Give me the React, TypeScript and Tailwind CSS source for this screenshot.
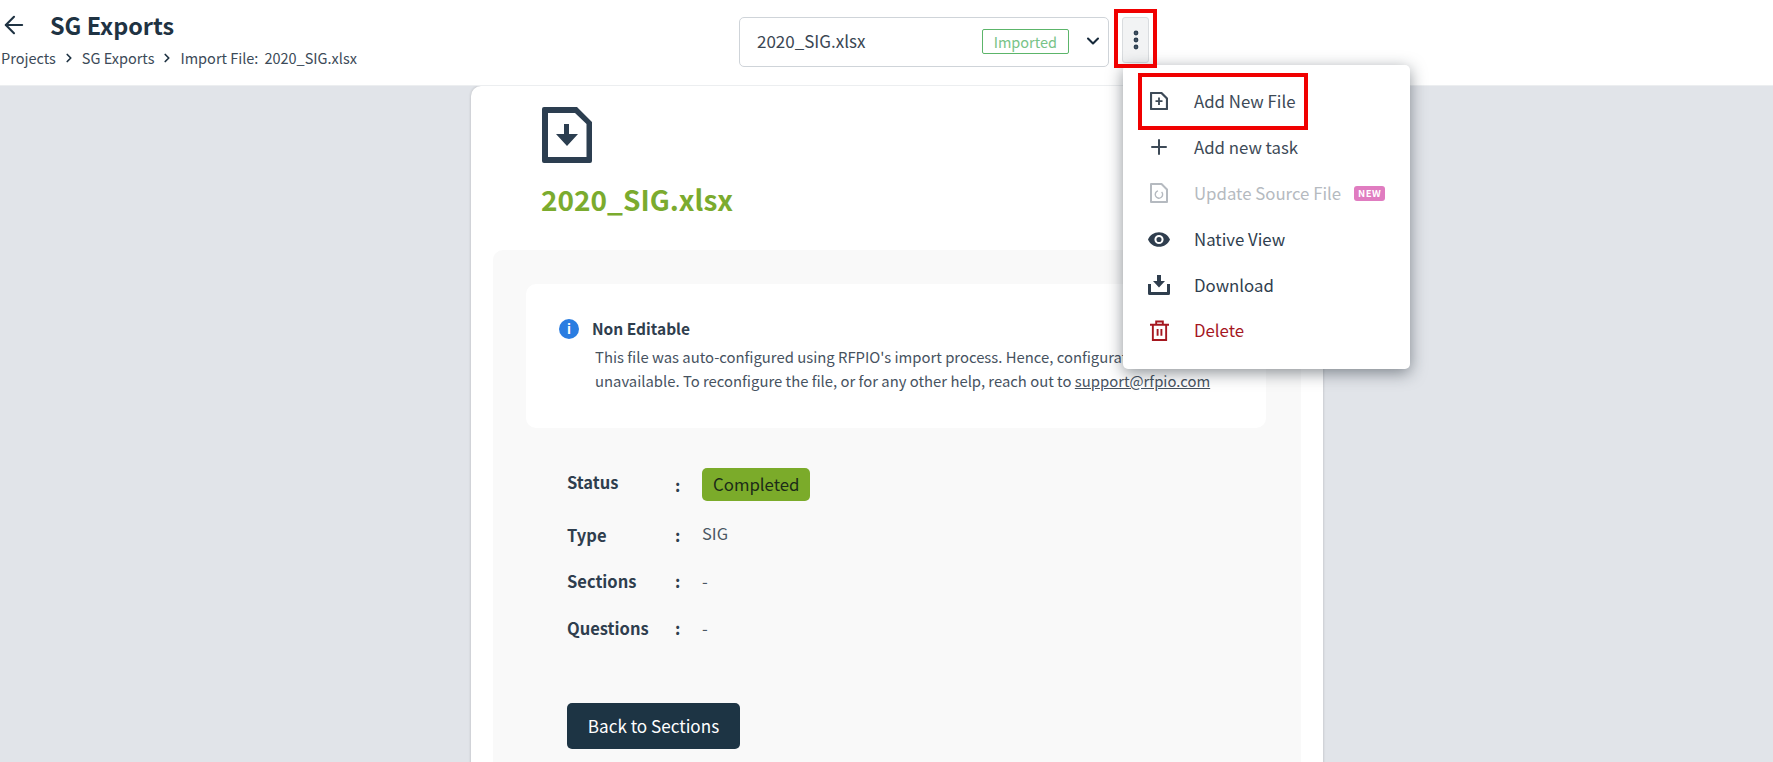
import { ArrowLeft, ChevronDown, ChevronRight, EllipsisVertical, Plus } from "lucide-react";

const fontStack = "font-['Noto_Sans_CJK_JP','Source_Sans_Pro',sans-serif]";

function FileAddIcon({ className }: { className?: string }) {
  return (
    <svg viewBox="0 0 18 18" className={className} fill="none" stroke="currentColor" strokeWidth="2.2">
      <path d="M1 1h10.500L17 6.500V17H1z" strokeLinejoin="round" />
      <path d="M9 5.500v7.500M5.500 9.200h7" strokeWidth="1.800" />
    </svg>
  );
}

function FileSyncIcon({ className }: { className?: string }) {
  return (
    <svg viewBox="0 0 18 20" className={className} fill="none" stroke="currentColor" strokeWidth="2">
      <path d="M1 1h10.500L17 6.500V19H1z" strokeLinejoin="round" />
      <path d="M11.600 8.900A3.700 3.700 0 1 1 8 7.900" strokeWidth="1.400" />
    </svg>
  );
}

function EyeIcon({ className }: { className?: string }) {
  return (
    <svg viewBox="0 0 24 16" className={className} fill="currentColor">
      <path
        fillRule="evenodd"
        d="M12 0C6.500 0 2 3.300 0 8c2 4.700 6.500 8 12 8s10-3.300 12-8c-2-4.700-6.500-8-12-8zm0 13a5 5 0 1 1 0-10 5 5 0 0 1 0 10zm0-2.200a2.800 2.800 0 1 0 0-5.600 2.800 2.800 0 0 0 0 5.600z"
      />
    </svg>
  );
}

function DownloadIcon({ className }: { className?: string }) {
  return (
    <svg viewBox="0 0 22 20" className={className} fill="currentColor">
      <path d="M9 0h4v6h4l-6 6.500L5 6h4z" />
      <path d="M0 9h3v8h16V9h3v9.500a1.500 1.500 0 0 1-1.500 1.500h-19A1.500 1.500 0 0 1 0 18.500z" />
    </svg>
  );
}

function TrashIcon({ className }: { className?: string }) {
  return (
    <svg viewBox="0 0 20 22" className={className} fill="none" stroke="currentColor" strokeWidth="2">
      <path d="M0 5h20M6.500 5V1.500h7V5M3 5v16h14V5" />
      <path d="M8 9.500v7M12 9.500v7" />
    </svg>
  );
}

function FileDownloadIcon({ className }: { className?: string }) {
  return (
    <svg viewBox="0 0 50 56" className={className}>
      <path
        fill="#2c3e50"
        fillRule="evenodd"
        d="M2 0h33l15 15v39a2 2 0 0 1-2 2H2a2 2 0 0 1-2-2V2a2 2 0 0 1 2-2zm4 6v44h38.500V17L33 6z"
      />
      <path fill="#2c3e50" d="M22 17h5v10h9L25 39 14 27h8z" />
    </svg>
  );
}

function DetailRow({
  label,
  children,
  className,
  raised,
}: {
  label: string;
  children: React.ReactNode;
  className?: string;
  raised?: boolean;
}) {
  return (
    <div className={`flex items-center ${className ?? ""}`}>
      <span className={`w-[108px] text-[16.5px] leading-6 font-semibold text-[#2f3e4e] ${raised ? "pb-[5px]" : ""}`}>{label}</span>
      <span className="w-[27px] text-[16.5px] leading-6 font-bold text-[#2f3e4e]">:</span>
      {children}
    </div>
  );
}

function MenuItem({
  icon,
  label,
  color,
  badge,
}: {
  icon: React.ReactNode;
  label: string;
  color: string;
  badge?: boolean;
}) {
  return (
    <div className={`flex h-[46px] items-center ${color}`}>
      <span className="flex w-[71px] shrink-0 justify-center pl-[1px]">{icon}</span>
      <span className="text-[16.8px] leading-6">{label}</span>
      {badge && (
        <span className="ml-[13px] rounded-[3px] bg-[#e07cc0] px-[4px] text-[9.500px] leading-[15px] font-bold tracking-[0.5px] text-white">
          NEW
        </span>
      )}
    </div>
  );
}

export default function App() {
  return (
    <div className={`relative h-[762px] overflow-hidden bg-[#e1e4e9] ${fontStack}`}>
      {/* Top bar */}
      <header className="relative flex h-[86px] items-start border-b border-[#eceef0] bg-white">
        <div className="w-[739px] shrink-0">
          <div className="mt-[9px] flex h-[32px] items-center">
            <ArrowLeft className="h-[28px] w-[28px] text-[#1f3343]" strokeWidth={1.8} />
            <h1 className="ml-[22px] text-[23.4px] leading-8 font-semibold text-[#1f3343]">SG Exports</h1>
          </div>
          <nav className="mt-[7px] flex h-5 items-center pl-[1px] text-[14.5px] leading-5 text-[#3c4a58]">
            <span>Projects</span>
            <ChevronRight className="mx-[6px] h-[14px] w-[14px] text-[#1f3343]" strokeWidth={3} />
            <span>SG Exports</span>
            <ChevronRight className="mx-[6px] h-[14px] w-[14px] text-[#1f3343]" strokeWidth={3} />
            <span>Import File:</span>
            <span className="ml-[6px]">2020_SIG.xlsx</span>
          </nav>
        </div>

        <div className="mt-[17px] flex h-[50px] w-[370px] shrink-0 items-center rounded-[5px] border border-[#cfd4d9] bg-white pr-[5px] pb-[2px] pl-[17px]">
          <span className="flex-1 text-[17px] leading-6 text-[#3a4653]">2020_SIG.xlsx</span>
          <span className="rounded-[2px] border border-[#5cb56a] px-[11px] text-[14.500px] leading-[23px] text-[#78c387]">Imported</span>
          <ChevronDown className="ml-[14px] h-[20px] w-[20px] text-[#16293a]" strokeWidth={2.5} />
        </div>

        <button className="mt-[17px] ml-[13px] flex h-[46px] w-[27px] items-center justify-center rounded-[3px] border border-[#d9dcdf] bg-[#f2f3f4]">
          <EllipsisVertical className="h-[24px] w-[24px] text-[#2c3e50]" strokeWidth={2.8} />
        </button>
      </header>

      {/* Page card */}
      <main className="ml-[471px] h-[700px] w-[852px] rounded-t-[10px] bg-white px-[22px] shadow-[0_0_3px_rgba(0,0,0,0.2)]">
        <div className="pt-[21px] pl-[48px]">
          <FileDownloadIcon className="ml-[1px] h-[56px] w-[50px]" />
          <h2 className="mt-[16px] text-[28px] leading-10 font-semibold text-[#7bab2e]">2020_SIG.xlsx</h2>
        </div>

        <section className="mt-[31px] h-[540px] rounded-[10px] bg-[#f9f9f9] px-[33px] pt-[34px]">
          <div className="h-[144px] w-[740px] rounded-[10px] bg-white pt-[35px] pl-[33px]">
            <div className="flex h-5 items-center text-[15.5px] font-semibold text-[#2f3e4e]">
              <span className="flex h-[20px] w-[20px] items-center justify-center rounded-full bg-[#2a7de1] text-[13px] font-bold text-white">
                i
              </span>
              <span className="ml-[13px]">Non Editable</span>
            </div>
            <p className="mt-[6px] ml-[36px] text-[14.850px] leading-[24px] text-[#46525f]">
              This file was auto-configured using RFPIO's import process. Hence, configuration options are
              <br />
              unavailable. To reconfigure the file, or for any other help, reach out to{" "}
              <span className="underline">support@rfpio.com</span>
            </p>
          </div>

          <div className="mt-[40px] ml-[41px]">
            <DetailRow label="Status" className="h-[33px]" raised>
              <span className="rounded-[5px] bg-[#7bab2a] px-[11px] text-[16.800px] leading-[33px] text-[#1c2c18]">Completed</span>
            </DetailRow>
            <DetailRow label="Type" className="mt-[20px] h-[28px]">
              <span className="pb-1 text-[16.5px] leading-6 text-[#4b5763]">SIG</span>
            </DetailRow>
            <DetailRow label="Sections" className="mt-[18px] h-[28px]">
              <span className="text-[16.5px] leading-6 text-[#4b5763]">-</span>
            </DetailRow>
            <DetailRow label="Questions" className="mt-[19px] h-[28px]">
              <span className="text-[16.5px] leading-6 text-[#4b5763]">-</span>
            </DetailRow>
            <button className="mt-[61px] h-[46px] w-[173px] rounded-[5px] bg-[#1d3444] text-[17.100px] leading-6 text-white">
              Back to Sections
            </button>
          </div>
        </section>
      </main>

      {/* Dropdown menu */}
      <div className="absolute top-[65px] left-[1123px] h-[304px] w-[287px] rounded-[5px] bg-white shadow-[0_4px_16px_rgba(30,40,50,0.5)]">
        <div className="mt-[13px]">
          <MenuItem icon={<FileAddIcon className="h-[18px] w-[18px]" />} label="Add New File" color="text-[#3d4a57]" />
          <MenuItem icon={<Plus className="h-[24px] w-[24px]" strokeWidth={2} />} label="Add new task" color="text-[#3d4a57]" />
          <MenuItem icon={<FileSyncIcon className="h-[20px] w-[18px]" />} label="Update Source File" color="text-[#b5bac0]" badge />
          <MenuItem icon={<EyeIcon className="h-[15px] w-[22px]" />} label="Native View" color="text-[#2f3e4e]" />
          <MenuItem icon={<DownloadIcon className="h-[20px] w-[22px]" />} label="Download" color="text-[#2f3e4e]" />
          <MenuItem icon={<TrashIcon className="h-[21px] w-[19px]" />} label="Delete" color="-mt-[1px] text-[#a5171f]" />
        </div>
      </div>

      {/* Red annotation boxes */}
      <div className="absolute top-[9px] left-[1114px] h-[59px] w-[43px] border-4 border-[#f00000]" />
      <div className="absolute top-[73px] left-[1138px] h-[57px] w-[170px] border-4 border-[#f00000]" />
    </div>
  );
}
